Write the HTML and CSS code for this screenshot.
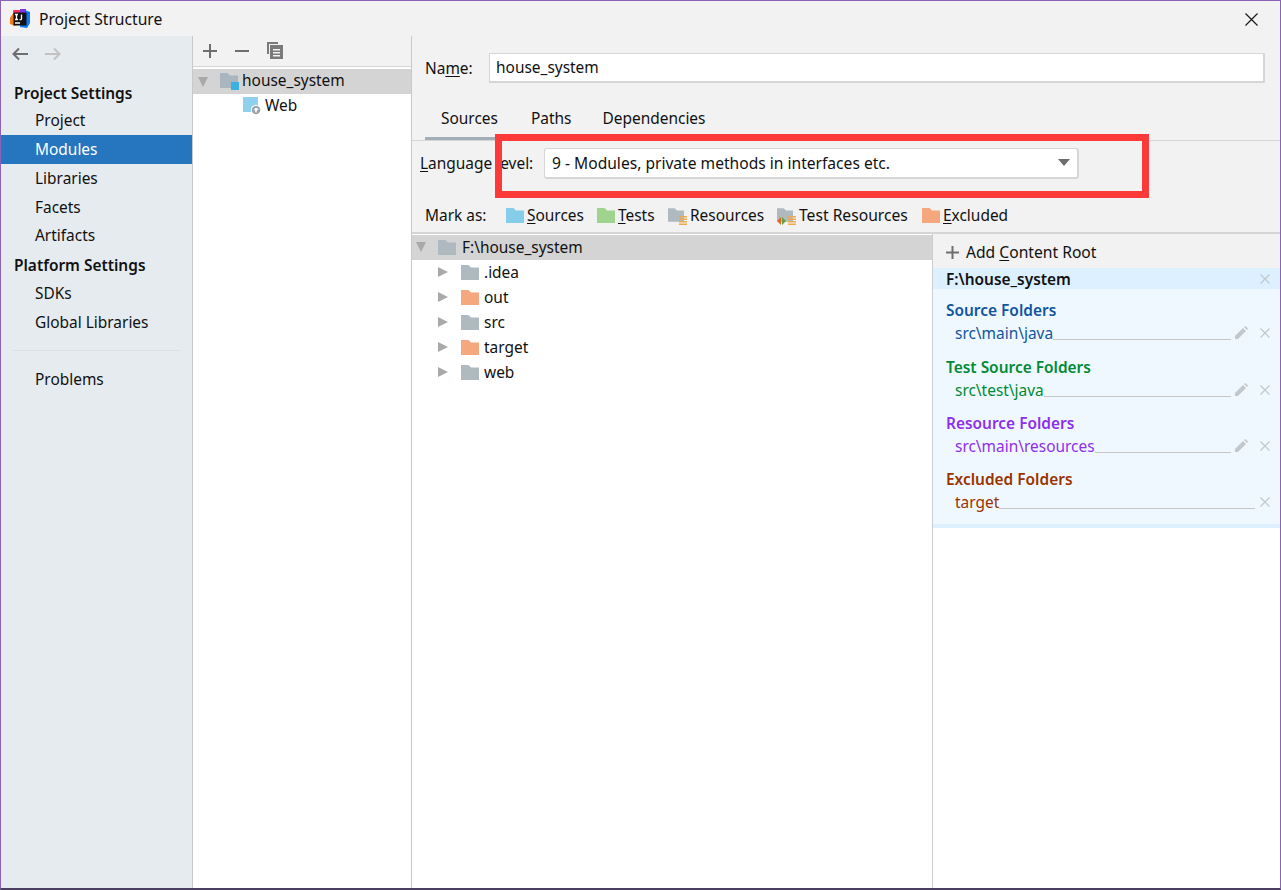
FILE: index.html
```html
<!DOCTYPE html>
<html lang="en">
<head>
<meta charset="utf-8">
<title>Project Structure</title>
<link rel="stylesheet" href="styles.css">
</head>
<body>
<svg class="defs" width="0" height="0" aria-hidden="true">
  <symbol id="folder" viewBox="0 0 18 15"><path fill="currentColor" d="M0 0h7.500l2.500 2.500h8v12.500h-18z"/></symbol>
  <symbol id="pencil" viewBox="0 0 14 14"><path fill="#c4c8cb" d="M1 10 9 2l3 3-8 8H1zM10 1l1.500-1L14 2.500 13 4z"/></symbol>
  <symbol id="cross" viewBox="0 0 10 10"><path fill="none" stroke="#c3c8cc" stroke-width="1.200" d="M.5.500l9 9M9.500.500l-9 9"/></symbol>
  <symbol id="res" viewBox="0 0 8 9"><path fill="#eda94f" d="M0 0h8v1.500H0zM0 2.500h8V4H0zM0 5h8v1.500H0zM0 7.500h8V9H0z"/></symbol>
</svg>
<div class="window">
  <header class="titlebar">
    <svg class="logo" width="20" height="20" viewBox="0 0 20 20">
      <path fill="#f97a12" d="M0 9 4 3l5 6-4 8-5-2z"/>
      <path fill="#fe315d" d="M3 1h9l-2 6-6 2z"/>
      <path fill="#087cfa" d="M12 0l8 3v11l-3 5-7-1z"/>
      <path fill="#7b36e0" d="M10 0h6v4H10z"/>
      <rect x="3.500" y="3.500" width="13" height="13" fill="#111"/>
      <path fill="none" stroke="#fff" stroke-width="1.300" d="M5 5.500h3M6.500 5.500v5M5 10.500h3M11.500 5.500v4.500q0 1-2 .6M5 14h5"/>
    </svg>
    <span class="title">Project Structure</span>
    <svg class="close" width="13" height="13" viewBox="0 0 13 13"><path fill="none" stroke="#1a1a1a" stroke-width="1.200" d="M.5.500l12 12M12.500.500l-12 12"/></svg>
  </header>
  <div class="main">
    <nav class="sidebar">
      <div class="history">
        <svg width="18" height="14" viewBox="0 0 18 14"><path fill="none" stroke="#6e6e6e" stroke-width="2" d="M17 7H3M8 1.500 2.500 7 8 12.500"/></svg>
        <svg width="18" height="14" viewBox="0 0 18 14"><path fill="none" stroke="#c2c2c2" stroke-width="2" d="M1 7h14M10 1.500 15.500 7 10 12.500"/></svg>
      </div>
      <div class="nav-heading first">Project Settings</div>
      <div class="nav-item">Project</div>
      <div class="nav-item selected">Modules</div>
      <div class="nav-item">Libraries</div>
      <div class="nav-item short">Facets</div>
      <div class="nav-item">Artifacts</div>
      <div class="nav-heading">Platform Settings</div>
      <div class="nav-item">SDKs</div>
      <div class="nav-item">Global Libraries</div>
      <div class="nav-sep"></div>
      <div class="nav-item">Problems</div>
    </nav>
    <section class="modules">
      <div class="mod-toolbar">
        <svg width="14" height="14" viewBox="0 0 14 14"><path fill="#6e6e6e" d="M6 0h2v6h6v2H8v6H6V8H0V6h6z"/></svg>
        <svg width="14" height="14" viewBox="0 0 14 14"><path fill="#6e6e6e" d="M0 6h14v2H0z"/></svg>
        <svg width="16" height="17" viewBox="0 0 16 17"><path fill="#7a7a7a" d="M0 0h11v2H2v10H0z"/><path fill="#7a7a7a" fill-rule="evenodd" d="M3 3h13v14H3zM6 7v1.500h7V7zm0 3v1.500h7V10zm0 3v1.500h7V13z"/></svg>
      </div>
      <div class="mod-row selected">
        <span class="tri-down"></span>
        <span class="icon-wrap">
          <svg class="f-module" width="18" height="15"><use href="#folder"/></svg>
          <span class="module-badge"></span>
        </span>
        <span class="mod-text">house_system</span>
      </div>
      <div class="mod-row web">
        <span class="icon-wrap">
          <svg width="18" height="18" viewBox="0 0 18 18"><rect x="0" y="0" width="15" height="15" fill="#8fd0ee"/><circle cx="13" cy="13" r="5.200" fill="#fff"/><circle cx="13" cy="13" r="4.300" fill="#9aa5ad"/><path fill="#fff" d="M10.500 12.500 13 10.800l2.500 1.200v.8H14l-.5 2.700-1.200-.3-.3-2.400z"/></svg>
        </span>
        <span class="mod-text">Web</span>
      </div>
    </section>
    <section class="detail">
      <div class="name-row">
        <label class="name-label">Na<u>m</u>e:</label>
        <div class="name-input">house_system</div>
      </div>
      <div class="tabs">
        <span class="tab active">Sources</span>
        <span class="tab paths">Paths</span>
        <span class="tab">Dependencies</span>
      </div>
      <div class="lang-row">
        <span class="lang-label"><u>L</u>anguage level:</span>
        <div class="combo"><span>9 - Modules, private methods in interfaces etc.</span><i class="combo-arrow"></i></div>
      </div>
      <div class="mark-row">
        <span class="mark-label">Mark as:</span>
        <span class="mark m1"><svg class="f-blue" width="18" height="15"><use href="#folder"/></svg><span><u>S</u>ources</span></span>
        <span class="mark m2"><svg class="f-green" width="18" height="15"><use href="#folder"/></svg><span><u>T</u>ests</span></span>
        <span class="mark m3"><span class="icon-wrap"><svg class="f-grey" width="16" height="14"><use href="#folder"/></svg><svg class="res-lines" width="8" height="9"><use href="#res"/></svg></span><span>Resources</span></span>
        <span class="mark m4"><span class="icon-wrap"><svg class="f-grey" width="16" height="14"><use href="#folder"/></svg><svg class="res-lines" width="8" height="9"><use href="#res"/></svg><svg class="test-arrows" width="9" height="8" viewBox="0 0 9 8"><path fill="#e8622c" d="M4 0v8L0 4z"/><path fill="#5da83a" d="M5 0v8l4-4z"/></svg></span><span class="wide">Test Resources</span></span>
        <span class="mark m5"><svg class="f-orange" width="18" height="15"><use href="#folder"/></svg><span><u>E</u>xcluded</span></span>
      </div>
      <div class="split">
        <div class="tree">
          <div class="tree-row root"><span class="tri-down"></span><svg class="f-grey" width="18" height="15"><use href="#folder"/></svg><span>F:\house_system</span></div>
          <div class="tree-row"><span class="tri-right"></span><svg class="f-grey" width="18" height="15"><use href="#folder"/></svg><span>.idea</span></div>
          <div class="tree-row"><span class="tri-right"></span><svg class="f-orange" width="18" height="15"><use href="#folder"/></svg><span>out</span></div>
          <div class="tree-row"><span class="tri-right"></span><svg class="f-grey" width="18" height="15"><use href="#folder"/></svg><span>src</span></div>
          <div class="tree-row"><span class="tri-right"></span><svg class="f-orange" width="18" height="15"><use href="#folder"/></svg><span>target</span></div>
          <div class="tree-row"><span class="tri-right"></span><svg class="f-grey" width="18" height="15"><use href="#folder"/></svg><span>web</span></div>
        </div>
        <aside class="roots">
          <div class="add-root"><svg width="13" height="13" viewBox="0 0 13 13"><path fill="#6e6e6e" d="M5.500 0h2v5.500H13v2H7.500V13h-2V7.500H0v-2h5.500z"/></svg><span class="wide">Add <u>C</u>ontent Root</span></div>
          <div class="root-head"><b>F:\house_system</b><svg width="10" height="10"><use href="#cross"/></svg></div>
          <div class="root-body">
            <div class="group source">
              <div class="group-title">Source Folders</div>
              <div class="group-item"><span>src\main\java</span><i class="dash"></i><svg class="pen" width="14" height="14"><use href="#pencil"/></svg><svg width="10" height="10"><use href="#cross"/></svg></div>
            </div>
            <div class="group test">
              <div class="group-title">Test Source Folders</div>
              <div class="group-item"><span>src\test\java</span><i class="dash"></i><svg class="pen" width="14" height="14"><use href="#pencil"/></svg><svg width="10" height="10"><use href="#cross"/></svg></div>
            </div>
            <div class="group resource">
              <div class="group-title">Resource Folders</div>
              <div class="group-item"><span>src\main\resources</span><i class="dash"></i><svg class="pen" width="14" height="14"><use href="#pencil"/></svg><svg width="10" height="10"><use href="#cross"/></svg></div>
            </div>
            <div class="group excluded">
              <div class="group-title">Excluded Folders</div>
              <div class="group-item"><span>target</span><i class="dash"></i><svg width="10" height="10"><use href="#cross"/></svg></div>
            </div>
          </div>
          <div class="root-foot"></div>
        </aside>
      </div>
    </section>
  </div>
  <div class="annotation"></div>
</div>
</body>
</html>
```
FILE: styles.css
```css
* { box-sizing: border-box; }
html, body { margin: 0; height: 100%; overflow: hidden; }
body { font-family: "Noto Sans", "Open Sans", sans-serif; font-size: 15.45px; color: #111; background: #f2f2f2; }
.defs { position: absolute; }
u { text-underline-offset: 2px; }
svg { display: block; flex: none; }

.window { position: relative; width: 1281px; height: 890px; display: flex; flex-direction: column; border-left: 1px solid #8a63b8; border-right: 1px solid #8a63b8; border-top: 1px solid #8a63b8; border-bottom: 2px solid #4a3f60; background: #f2f2f2; }

.titlebar { height: 35px; flex: none; display: flex; align-items: center; padding: 0 22px 0 9px; }
.title { margin-left: 9px; font-size: 15.65px; }
.close { margin-left: auto; margin-top: 1px; }
.logo { margin-top: 1px; }

.main { flex: 1; display: flex; min-height: 0; }

.sidebar { width: 192px; flex: none; background: #e6ebf0; border-right: 1px solid #c9c9c9; display: flex; flex-direction: column; }
.history { height: 36px; display: flex; align-items: center; gap: 15px; padding: 0 0 0 10px; flex: none; }
.nav-heading { height: 29px; line-height: 30px; padding-left: 13px; font-weight: 600; }
.nav-heading.first { margin-top: 8px; height: 26px; line-height: 26px; }
.nav-item { height: 29px; line-height: 28px; padding-left: 34px; }
.nav-item.short { height: 28px; }
.nav-item.selected { background: #2675bf; color: #fff; }
.nav-sep { height: 1px; background: #dcdfe3; margin: 13px 12px 14px 12px; }

.modules { width: 219px; flex: none; background: #fff; border-right: 1px solid #c9c9c9; display: flex; flex-direction: column; }
.mod-toolbar { height: 31px; flex: none; background: #f2f2f2; border-bottom: 1px solid #d5d5d5; display: flex; align-items: center; gap: 18px; padding: 0 0 1px 10px; }
.mod-row { display: flex; align-items: center; height: 25px; flex: none; }
.mod-text { margin-top: -3px; }
.mod-row.selected { margin-top: 2px; background: #d4d4d4; padding-left: 5px; }
.mod-row.selected .icon-wrap { margin: -2px 4px 0 12px; }
.mod-row.web { padding-left: 50px; }
.mod-row.web .icon-wrap { margin: -2px 4px 0 0; }
.icon-wrap { position: relative; display: block; flex: none; }
.f-module { color: #a9b6bf; }
.module-badge { position: absolute; right: -1px; bottom: -2px; width: 8px; height: 8px; background: #3bb0e2; border: 0; }

.tri-down { width: 0; height: 0; border-left: 5.500px solid transparent; border-right: 5.500px solid transparent; border-top: 10px solid #a9a9a9; flex: none; }
.tri-right { width: 0; height: 0; border-top: 5.500px solid transparent; border-bottom: 5.500px solid transparent; border-left: 10px solid #a9a9a9; flex: none; }

.detail { flex: 1; min-width: 0; display: flex; flex-direction: column; }
.name-row { display: flex; align-items: center; height: 32px; margin-top: 16px; padding: 0 15px 0 13px; flex: none; }
.name-label { width: 64px; }
.name-input { flex: 1; height: 30px; line-height: 27px; background: #fff; border: 1px solid #d6d6d6; border-width: 1px 2px 2px 1px; padding-left: 6px; }
.tabs { height: 37px; margin-top: 20px; display: flex; padding-left: 13px; border-bottom: 1px solid #d5d5d5; flex: none; }
.tab { padding: 0 16px; line-height: 29px; height: 37px; }
.tab.active { width: 91px; border-bottom: 3px solid #a3adba; height: 36px; }
.tab.paths { padding: 0 15px; }
.lang-row { display: flex; align-items: center; height: 44px; padding: 0 0 0 8px; flex: none; }
.lang-label { width: 124px; }
.combo { width: 535px; height: 31px; font-size: 15.6px; background: #fff; border: 1px solid #d6d6d6; border-width: 1px 2px 2px 1px; border-radius: 3px; padding: 0 7px; display: flex; align-items: center; justify-content: space-between; }
.combo-arrow { width: 0; height: 0; border-left: 6.500px solid transparent; border-right: 6.500px solid transparent; border-top: 7px solid #6e6e6e; }
.mark-row { display: flex; align-items: center; margin-top: 13px; padding-left: 13px; border-bottom: 2px solid #d5d5d5; flex: none; height: 36px; }
.mark { display: flex; align-items: center; }
.mark-label { width: 81px; }
.mark > svg { margin-right: 3px; }
.wide { font-size: 15.65px; }
.m1 { width: 91px; } .m2 { width: 71px; } .m3 { width: 109px; } .m4 { width: 145px; }
.mark .icon-wrap { width: 19px; height: 17px; margin-right: 3px; margin-top: 2px; }
.res-lines { position: absolute; right: 0; bottom: 0; }
.test-arrows { position: absolute; left: 0; bottom: 0; }
.f-blue { color: #85cde9; } .f-green { color: #a0d38d; } .f-grey { color: #aeb9c0; } .f-orange { color: #f5a77d; }

.split { flex: 1; display: flex; min-height: 0; background: #fff; }
.tree { flex: none; padding-top: 1px; border-right: 1px solid #cdcdcd; width: 521px; }
.tree-row { display: flex; align-items: center; height: 25px; padding: 0 0 1px 26px; }
.tree-row svg { margin: 0 5px 0 13px; }
.tree-row.root { background: #d4d4d4; padding-left: 4px; }
.tree-row.root svg { margin: 0 6px 0 12px; }
.roots { flex: 1; min-width: 0; display: flex; flex-direction: column; }
.add-root { height: 34px; flex: none; background: #f2f2f2; display: flex; align-items: center; gap: 7px; padding: 2px 0 0 13px; }
.root-head { height: 21px; background: #dcf0ff; flex: none; display: flex; align-items: center; justify-content: space-between; padding: 0 10px 0 13px; }
.root-head b { font-weight: 600; }
.root-body { background: #f0f8ff; height: 235px; flex: none; padding-top: 10px; }
.root-foot { height: 4px; background: #dcf0ff; }
.group { height: 56px; padding: 0 10px 0 13px; }
.group.source { height: 57px; }
.group-title { font-weight: 600; height: 22px; line-height: 22px; }
.group-item { display: flex; align-items: center; height: 24px; padding-left: 9px; }
.dash { flex: 1; height: 1px; background: #c6c6c6; margin-top: 12px; }
.pen { margin: 0 12px 0 3px; }
.excluded .dash { margin-right: 5px; }
.source { color: #0f55a0; } .test { color: #008a35; } .resource { color: #8c2fee; } .excluded { color: #993300; }

.annotation { position: absolute; left: 494px; top: 133px; width: 654px; height: 64px; border: 7px solid #fc3a3a; }
```
